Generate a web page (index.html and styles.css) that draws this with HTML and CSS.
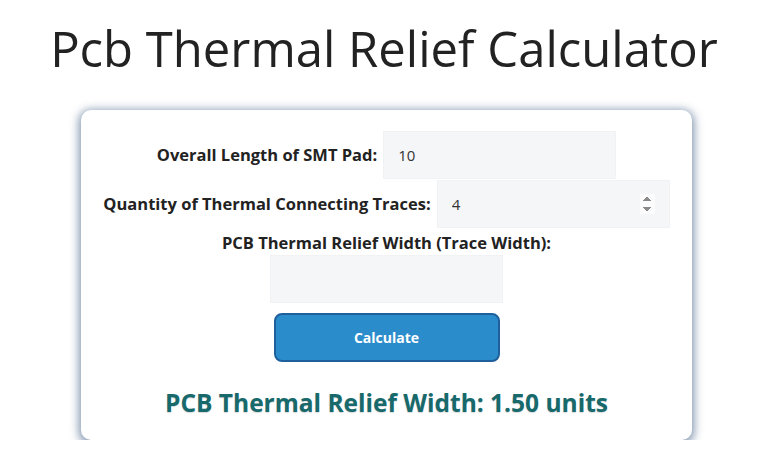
FILE: index.html
```html
<!DOCTYPE html>
<html lang="en">
<head>
<meta charset="utf-8">
<title>Pcb Thermal Relief Calculator</title>
<link rel="stylesheet" href="styles.css">
</head>
<body>
<h1 class="title">Pcb Thermal Relief Calculator</h1>
<div class="card">
  <div class="row">
    <label class="label" for="padLength">Overall Length of SMT Pad:</label>
    <input class="field" id="padLength" type="text" value="10">
  </div>
  <div class="row">
    <label class="label" for="traceCount">Quantity of Thermal Connecting Traces:</label>
    <input class="field" id="traceCount" type="number" value="4">
  </div>
  <div class="stack">
    <label class="label" for="traceWidth">PCB Thermal Relief Width (Trace Width):</label>
    <input class="field" id="traceWidth" type="text" value="">
  </div>
  <button class="calc" type="button">Calculate</button>
  <p class="result">PCB Thermal Relief Width: 1.50 units</p>
</div>
</body>
</html>
```
FILE: styles.css
```css
* { box-sizing: border-box; }

body {
  margin: 0;
  background: #fff;
  font-family: "Open Sans", "Noto Sans", sans-serif;
  color: #222;
}

.title {
  margin: 0;
  padding-top: 18px;
  height: 110px;
  text-align: center;
  font-weight: 400;
  font-size: 49px;
  line-height: 60px;
  color: #222;
}

.card {
  width: 611px;
  margin-left: 81px;
  height: 330px;
  padding-top: 20px;
  background: #fff;
  border-radius: 10px;
  box-shadow: 0 2px 10px 2px rgba(60, 90, 130, 0.65);
  display: flex;
  flex-direction: column;
  align-items: center;
}

.row {
  display: flex;
  align-items: center;
  gap: 6px;
  height: 49px;
}

.label {
  font-weight: 700;
  font-size: 16.5px;
  color: #222;
}

.field {
  width: 233px;
  height: 48px;
  border: 1px solid #f1f2f4;
  background: #f5f6f8;
  padding: 0 14px;
  font-family: inherit;
  font-size: 15px;
  color: #333;
  outline: none;
}

.field::-webkit-inner-spin-button {
  opacity: 1;
}

.stack {
  display: flex;
  flex-direction: column;
  align-items: center;
  gap: 1px;
  margin-top: 3px;
}

.calc {
  margin-top: 10px;
  width: 226px;
  height: 49px;
  background: #2b8ccb;
  border: 2px solid #1e5f9c;
  border-radius: 8px;
  color: #fff;
  font-family: inherit;
  font-weight: 700;
  font-size: 14px;
}

.result {
  margin: 24px 0 0;
  font-weight: 700;
  font-size: 24.5px;
  color: #17696b;
  text-shadow: 0 1px 1px rgba(0, 0, 0, 0.15);
}
```
